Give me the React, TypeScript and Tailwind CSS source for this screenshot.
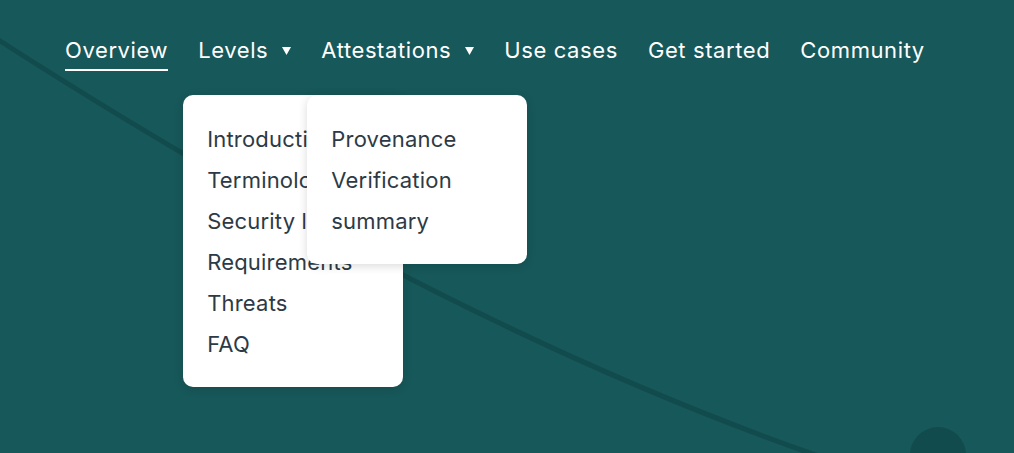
import React from "react";

interface NavItem {
  name: string;
  active?: boolean;
  menu?: string[];
}

const items: NavItem[] = [
  { name: "Overview", active: true },
  {
    name: "Levels",
    menu: ["Introduction", "Terminology", "Security levels", "Requirements", "Threats", "FAQ"],
  },
  { name: "Attestations", menu: ["Provenance", "Verification summary"] },
  { name: "Use cases" },
  { name: "Get started" },
  { name: "Community" },
];

const Caret = () => (
  <svg width="9" height="8" viewBox="0 0 9 8" className="ml-[14px] mt-[1px]">
    <path d="M0 0 H9 L4.5 8 Z" fill="white" />
  </svg>
);

const App: React.FC = () => {
  return (
    <div
      className="relative w-[1014px] h-[453px] overflow-hidden bg-[#17585a]"
      style={{ fontFamily: "Inter, 'Noto Sans', sans-serif" }}
    >
      <svg className="absolute inset-0" width="1014" height="453" viewBox="0 0 1014 453">
        <path d="M-20 28 Q440 326 830 460" stroke="#124b4d" strokeWidth="5" fill="none" />
        <circle cx="938" cy="455" r="28" fill="#124b4d" />
      </svg>

      <nav className="relative flex items-start gap-[30px] pl-[65px] pt-[36px]">
        {items.map((item, i) => (
          <div key={item.name} className="relative">
            <div className="flex items-center">
              <span className="text-[22px] leading-[28px] text-white tracking-[0.6px]">{item.name}</span>
              {item.menu && <Caret />}
            </div>
            {item.active && <div className="mt-[5px] h-[2px] bg-white"></div>}
            {item.menu && (
              <div
                className={`absolute top-[59px] w-[220px] bg-white rounded-[10px] pl-6 pr-4 pt-6 pb-[22px] shadow-[0_2px_10px_rgba(0,0,0,0.15)] ${
                  i === 2 ? "z-20 left-[-14px]" : "z-10 left-[-15px]"
                }`}
              >
                {item.menu.map((m) => (
                  <div key={m} className="text-[22px] leading-[41px] text-[#2d3a45] tracking-[0.2px] whitespace-pre-wrap">
                    {m === "Verification summary" ? "Verification\nsummary" : m}
                  </div>
                ))}
              </div>
            )}
          </div>
        ))}
      </nav>
    </div>
  );
};

export default App;
